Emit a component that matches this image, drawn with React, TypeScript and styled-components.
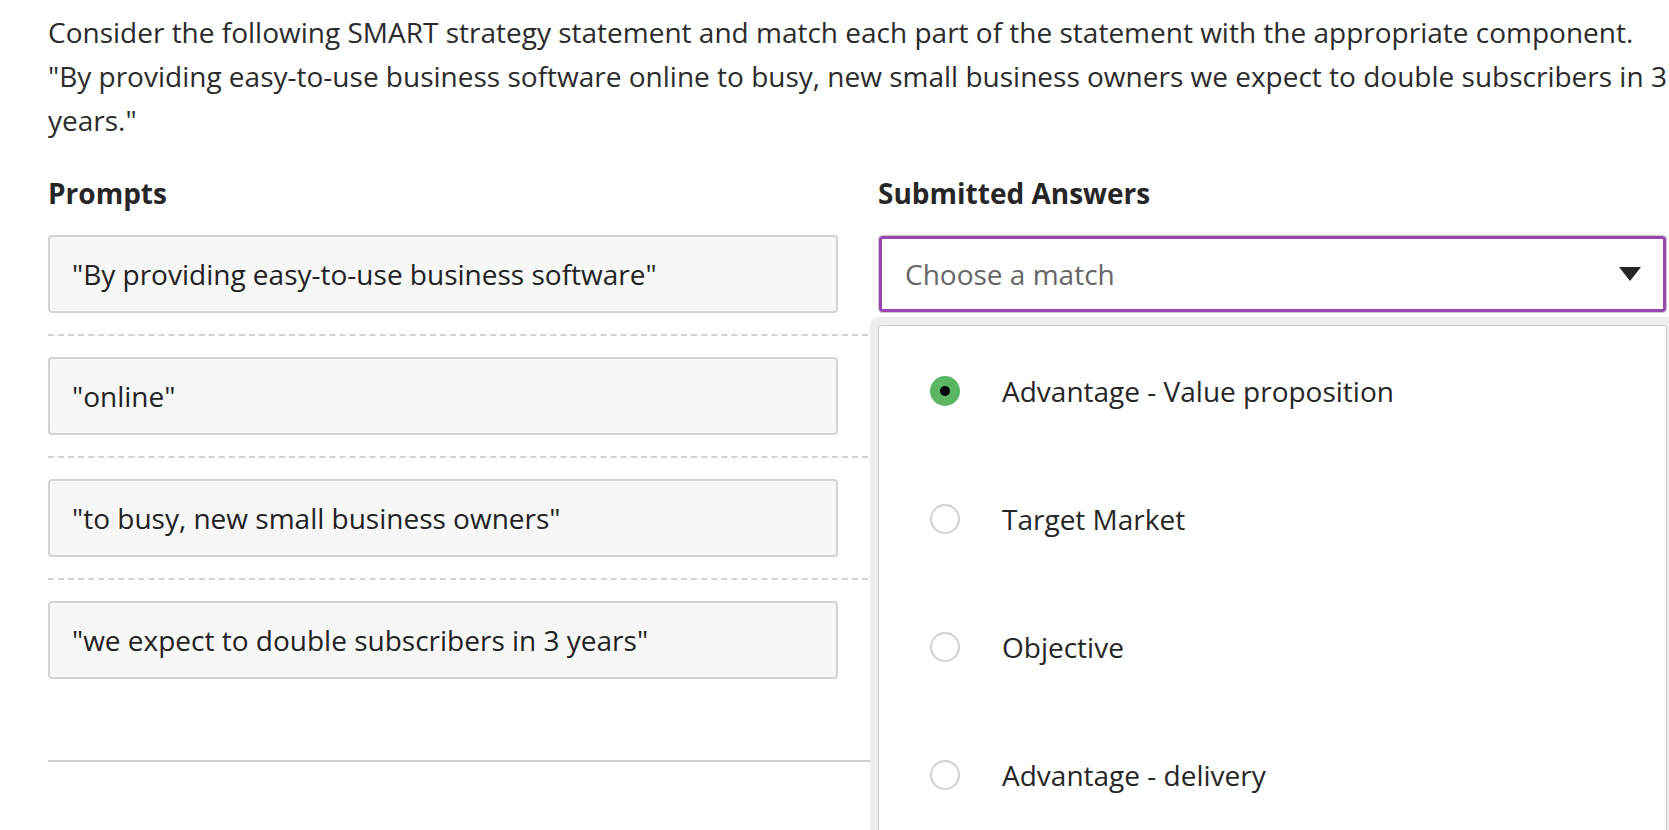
import React from 'react';
import styled, { createGlobalStyle } from 'styled-components';

const GlobalStyle = createGlobalStyle`
  html, body {
    margin: 0;
    padding: 0;
    background: #ffffff;
    overflow: hidden;
  }
  body {
    font-family: 'Open Sans', 'Noto Sans', sans-serif;
    color: #262626;
  }
`;

const Page = styled.div`
  height: 100vh;
  overflow: hidden;
  padding: 10px 2px 0 48px;
  box-sizing: border-box;
`;

const Question = styled.p`
  margin: 0;
  font-size: 28px;
  line-height: 44px;
  color: #2b2b2b;
`;

const Columns = styled.div`
  display: grid;
  grid-template-columns: 790px 789px;
  column-gap: 40px;
  margin-top: 29px;
`;

const Column = styled.div`
  position: relative;
`;

const Heading = styled.h3`
  margin: 0 0 20px;
  font-size: 28px;
  line-height: 44px;
  font-weight: 700;
  color: #262626;
`;

const PromptRow = styled.div<{ $last?: boolean }>`
  margin-right: -40px;
  padding-right: 40px;
  padding-bottom: ${p => (p.$last ? '0' : '21px')};
  margin-bottom: ${p => (p.$last ? '0' : '21px')};
  border-bottom: ${p => (p.$last ? 'none' : '2px dashed #d2d2d2')};
`;

const PromptBox = styled.div`
  height: 78px;
  box-sizing: border-box;
  display: flex;
  align-items: center;
  padding: 0 22px;
  background: #f7f7f7;
  border: 2px solid #d3d3d3;
  border-radius: 4px;
  font-size: 28px;
  color: #222;
`;

const Divider = styled.div`
  margin-top: 81px;
  margin-right: -40px;
  height: 2px;
  background: #cfcfcf;
`;

const SelectWrap = styled.div`
  position: relative;
`;

const Select = styled.div`
  height: 78px;
  box-sizing: border-box;
  display: flex;
  align-items: center;
  justify-content: space-between;
  padding: 0 25px 0 26px;
  border: 1px solid #c8c8c8;
  border-radius: 4px;
  box-shadow: inset 0 0 0 3px #9b45b1;
  font-size: 28px;
  color: #666666;
`;

const Menu = styled.div`
  position: absolute;
  top: calc(100% + 4px);
  left: -8px;
  right: -8px;
  padding: 8px;
  background: #eeeeee;
  border-radius: 8px;
  z-index: 5;
`;

const MenuInner = styled.div`
  background: #ffffff;
  border: 1px solid #cccccc;
  border-radius: 3px;
  padding-top: 1px;
  height: 700px;
`;

const Option = styled.div`
  height: 128px;
  display: flex;
  align-items: center;
  gap: 42px;
  padding-left: 51px;
  font-size: 28px;
  color: #262626;
`;

const Radio = styled.span<{ $checked?: boolean }>`
  width: 30px;
  height: 30px;
  flex: none;
  box-sizing: border-box;
  border-radius: 50%;
  display: flex;
  align-items: center;
  justify-content: center;
  background: ${p => (p.$checked ? '#5cb562' : '#ffffff')};
  border: ${p => (p.$checked ? 'none' : '2px solid #d0d0d0')};

  &::after {
    content: '';
    display: ${p => (p.$checked ? 'block' : 'none')};
    width: 10px;
    height: 10px;
    border-radius: 50%;
    background: #000;
  }
`;

const prompts = [
  '"By providing easy-to-use business software"',
  '"online"',
  '"to busy, new small business owners"',
  '"we expect to double subscribers in 3 years"',
];

const options = [
  'Advantage - Value proposition',
  'Target Market',
  'Objective',
  'Advantage - delivery',
];

const App: React.FC = () => {
  return (
    <Page>
      <GlobalStyle />
      <Question>
        Consider the following SMART strategy statement and match each part of the statement with the appropriate component.
        <br />
        "By providing easy-to-use business software online to busy, new small business owners we expect to double subscribers in 3 years."
      </Question>

      <Columns>
        <Column>
          <Heading>Prompts</Heading>
          {prompts.map((p, i) => (
            <PromptRow key={p} $last={i === prompts.length - 1}>
              <PromptBox>{p}</PromptBox>
            </PromptRow>
          ))}
          <Divider />
        </Column>

        <Column>
          <Heading>Submitted Answers</Heading>
          <SelectWrap>
            <Select>
              Choose a match
              <svg width="22" height="14" viewBox="0 0 22 14">
                <path d="M0 0 H22 L11 14 Z" fill="#262626" />
              </svg>
            </Select>
            <Menu>
              <MenuInner>
                {options.map((o, i) => (
                  <Option key={o}>
                    <Radio $checked={i === 0} />
                    {o}
                  </Option>
                ))}
              </MenuInner>
            </Menu>
          </SelectWrap>
        </Column>
      </Columns>
    </Page>
  );
};

export default App;
